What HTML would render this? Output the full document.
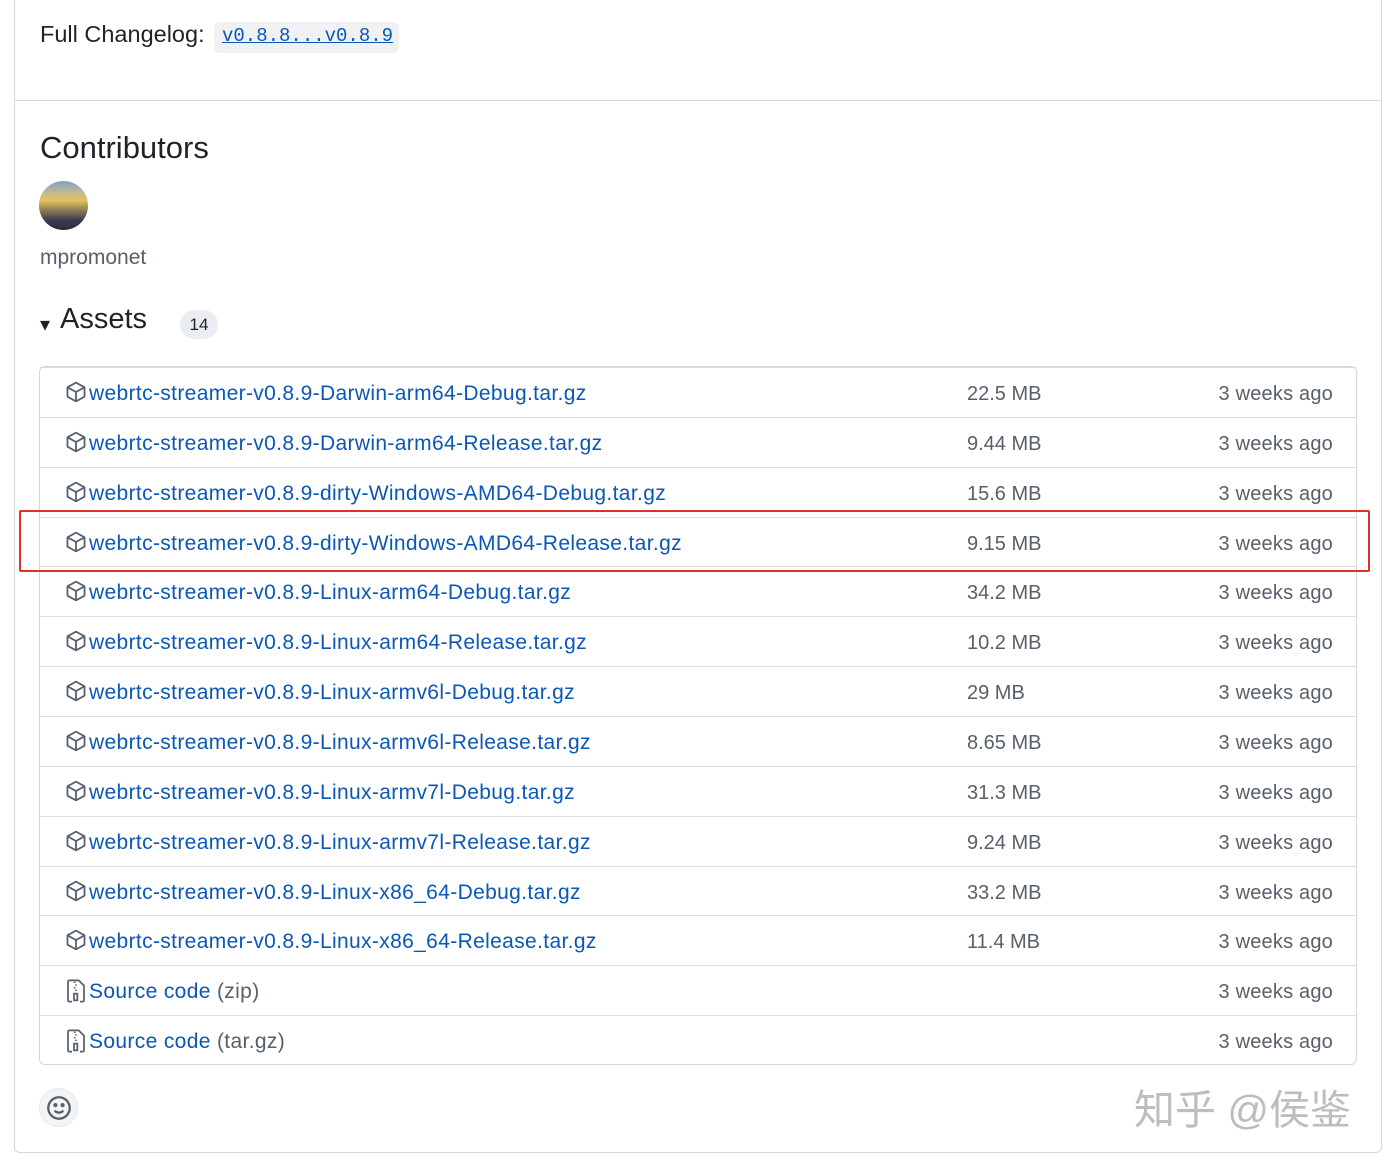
<!DOCTYPE html>
<html><head><meta charset="utf-8"><style>
*{margin:0;padding:0;box-sizing:border-box}
body{width:1387px;height:1159px;background:#fff;font-family:"Segoe UI","Liberation Sans",sans-serif;color:#1f2328;position:relative;overflow:hidden}
.card{position:absolute;left:14px;top:-10px;width:1368px;height:1163px;border:1px solid #d0d7de;border-radius:6px}
.abs{position:absolute}
.list{position:absolute;left:39px;top:366px;width:1318px;height:699px;border:1px solid #d0d7de;border-radius:6px}
.row{position:absolute;left:0;width:1316px;height:50px;border-top:1px solid #d8dee4;font-size:20px}
.row:first-child{border-top:none}
.row .ic{position:absolute;left:25px;top:13px}
.row .n{position:absolute;left:49px;top:14px;color:#0b57b8;white-space:nowrap;font-size:21px;letter-spacing:0.35px}
.row .s{position:absolute;left:927px;top:15px;color:#57606a}
.row .t{position:absolute;right:23px;top:15px;color:#57606a;letter-spacing:0.2px}
.g{color:#57606a}
</style></head><body>
<div class="card"></div>
<div class="abs" style="left:14px;top:100px;width:1368px;border-top:1px solid #d0d7de"></div>
<div class="abs" style="left:40px;top:21px;font-size:23.5px;">Full Changelog:</div>
<div class="abs" style="left:214px;top:22px;width:185px;height:31px;background:#eff1f3;border-radius:6px"></div>
<div class="abs" style="left:222px;top:25px;font-family:'Liberation Mono',monospace;font-size:19px;color:#0b57b8;text-decoration:underline">v0.8.8...v0.8.9</div>
<div class="abs" style="left:40px;top:130px;font-size:31px;">Contributors</div>
<div class="abs" style="left:39px;top:181px;width:49px;height:49px;border-radius:50%;background:linear-gradient(#7aa4c8 0%,#c9b98a 25%,#e3c15a 40%,#8a7a55 60%,#3d3a52 80%,#2c2a40 100%)"></div>
<div class="abs" style="left:40px;top:246px;font-size:21px;color:#57606a">mpromonet</div>
<div class="abs" style="left:40px;top:312px;font-size:20px">▾</div>
<div class="abs" style="left:60px;top:303px;font-size:29px">Assets</div>
<div class="abs" style="left:180px;top:310px;width:38px;height:29px;border-radius:15px;background:#eaeef2;font-size:17px;text-align:center;line-height:29px">14</div>
<div class="list">
<script>
var rows=[["webrtc-streamer-v0.8.9-Darwin-arm64-Debug.tar.gz","22.5 MB"],["webrtc-streamer-v0.8.9-Darwin-arm64-Release.tar.gz","9.44 MB"],["webrtc-streamer-v0.8.9-dirty-Windows-AMD64-Debug.tar.gz","15.6 MB"],["webrtc-streamer-v0.8.9-dirty-Windows-AMD64-Release.tar.gz","9.15 MB"],["webrtc-streamer-v0.8.9-Linux-arm64-Debug.tar.gz","34.2 MB"],["webrtc-streamer-v0.8.9-Linux-arm64-Release.tar.gz","10.2 MB"],["webrtc-streamer-v0.8.9-Linux-armv6l-Debug.tar.gz","29 MB"],["webrtc-streamer-v0.8.9-Linux-armv6l-Release.tar.gz","8.65 MB"],["webrtc-streamer-v0.8.9-Linux-armv7l-Debug.tar.gz","31.3 MB"],["webrtc-streamer-v0.8.9-Linux-armv7l-Release.tar.gz","9.24 MB"],["webrtc-streamer-v0.8.9-Linux-x86_64-Debug.tar.gz","33.2 MB"],["webrtc-streamer-v0.8.9-Linux-x86_64-Release.tar.gz","11.4 MB"],["Source code|(zip)",""],["Source code|(tar.gz)",""]];
var box='<svg class="ic" width="22" height="22" viewBox="0 0 16 16" fill="none" stroke="#57606a" stroke-width="1.3" stroke-linejoin="round"><path d="M8 1.2 14.2 4.6v6.8L8 14.8 1.8 11.4V4.6z"/><path d="M1.8 4.6 8 8l6.2-3.4M8 8v6.8"/></svg>';
var zip='<svg class="ic" width="22" height="24" viewBox="0 0 16 18" fill="none" stroke="#57606a" stroke-width="1.3"><path d="M3 1h7l4 4v11a1 1 0 0 1-1 1h-2M5 17H3a1 1 0 0 1-1-1V2a1 1 0 0 1 1-1"/><path d="M7 2v1M8 4v1M7 6v1M8 8v1" /><rect x="6.5" y="11" width="2.5" height="5"/></svg>';
var h='';
rows.forEach(function(r,i){
 var top=Math.round(i*49.86);
 var name=r[0].indexOf('|')>=0?r[0].split('|')[0]+' <span class="g">'+r[0].split('|')[1]+'</span>':r[0];
 h+='<div class="row" style="top:'+top+'px">'+(i>=12?zip:box)+'<span class="n">'+name+'</span><span class="s">'+r[1]+'</span><span class="t">3 weeks ago</span></div>';
});
document.write(h);
</script>
</div>
<div class="abs" style="left:19px;top:510px;width:1351px;height:62px;border:2px solid #e0302a;border-radius:2px"></div>
<div class="abs" style="left:39px;top:1088px;width:39px;height:39px;border-radius:50%;background:#f3f4f6;border:1px solid #e5e7ea"></div>
<svg class="abs" style="left:46px;top:1095px" width="26" height="26" viewBox="0 0 16 16" fill="none" stroke="#57606a" stroke-width="1.4"><circle cx="8" cy="8" r="6.6"/><path d="M5.3 9.6c1.4 1.6 4 1.6 5.4 0"/><circle cx="5.8" cy="6.2" r=".6" fill="#57606a"/><circle cx="10.2" cy="6.2" r=".6" fill="#57606a"/></svg>
<div class="abs" style="left:1134px;top:1076px;font-size:41px;color:#bdbdbd;font-family:'Liberation Sans','Noto Sans CJK SC',sans-serif">知乎 @侯鉴</div>
</body></html>
